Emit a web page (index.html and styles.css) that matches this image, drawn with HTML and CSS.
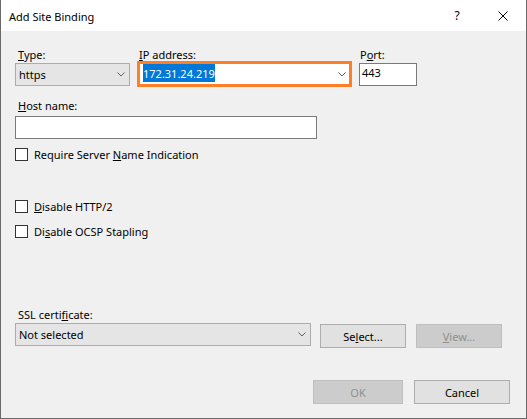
FILE: index.html
```html
<!DOCTYPE html>
<html lang="en">
<head>
<meta charset="utf-8">
<title>Add Site Binding</title>
<link rel="stylesheet" href="styles.css">
</head>
<body>
<div class="window">
  <div class="titlebar">
    <span class="title">Add Site Binding</span>
    <span class="cap-btn help">?</span>
    <span class="cap-btn close">
      <svg width="10" height="10" viewBox="0 0 10 10"><path d="M0.5 0.5 L9.5 9.5 M9.5 0.5 L0.5 9.5" stroke="#000" stroke-width="1" fill="none"/></svg>
    </span>
  </div>
  <div class="content">
    <div class="row-top">
      <div class="col col-type">
        <div class="lbl lbl-type"><u>T</u>ype:</div>
        <div class="combo combo-type">
          <span class="combo-text">https</span>
          <svg class="chev" width="8" height="5" viewBox="0 0 8 5"><path d="M0.5 0.5 L4 4 L7.5 0.5" stroke="#606060" stroke-width="1" fill="none"/></svg>
        </div>
      </div>
      <div class="col col-ip">
        <div class="lbl lbl-ip"><u>I</u>P address:</div>
        <div class="ip-focus">
          <span class="sel">172.31.24.219</span>
          <svg class="chev" width="8" height="5" viewBox="0 0 8 5"><path d="M0.5 0.5 L4 4 L7.5 0.5" stroke="#606060" stroke-width="1" fill="none"/></svg>
        </div>
      </div>
      <div class="col col-port">
        <div class="lbl lbl-port">P<u>o</u>rt:</div>
        <div class="textbox port-field">443</div>
      </div>
    </div>

    <div class="lbl lbl-host"><u>H</u>ost name:</div>
    <div class="textbox host-field"></div>

    <div class="check check-sni"><span class="box"></span><span class="check-text">Require Server <u>N</u>ame Indication</span></div>
    <div class="check check-http2"><span class="box"></span><span class="check-text"><u>D</u>isable HTTP/2</span></div>
    <div class="check check-ocsp"><span class="box"></span><span class="check-text">Di<u>s</u>able OCSP Stapling</span></div>

    <div class="lbl lbl-ssl">SSL certi<u>f</u>icate:</div>
    <div class="ssl-row">
      <div class="combo combo-ssl">
        <span class="combo-text">Not selected</span>
        <svg class="chev" width="8" height="5" viewBox="0 0 8 5"><path d="M0.5 0.5 L4 4 L7.5 0.5" stroke="#606060" stroke-width="1" fill="none"/></svg>
      </div>
      <div class="btn btn-select">Se<u>l</u>ect...</div>
      <div class="btn btn-view disabled"><u>V</u>iew...</div>
    </div>

    <div class="footer">
      <div class="btn btn-ok disabled">OK</div>
      <div class="btn btn-cancel">Cancel</div>
    </div>
  </div>
</div>
</body>
</html>
```

FILE: styles.css
```css
* { box-sizing: border-box; }

html, body {
  margin: 0;
  padding: 0;
  background: #f0f0f0;
}

body {
  font-family: "Noto Sans", "Open Sans", sans-serif;
  font-size: 11px;
  line-height: 15px;
  color: #000;
}

.window {
  width: 527px;
  height: 419px;
  border-left: 1px solid #6a6a6a;
  border-right: 1px solid #6a6a6a;
  border-bottom: 1px solid #6a6a6a;
  background: #f0f0f0;
  display: flex;
  flex-direction: column;
}

.titlebar {
  height: 31px;
  background: #fff;
  display: flex;
  align-items: center;
  flex-shrink: 0;
}

.title {
  flex: 1;
  padding-left: 8px;
  font-size: 11px;
  line-height: 15px;
  padding-top: 1px;
}

.cap-btn {
  width: 46px;
  height: 31px;
  display: flex;
  align-items: center;
  justify-content: center;
}

.help {
  font-size: 12px;
  padding-top: 0;
}

.content {
  flex: 1;
  padding-left: 14px;
  display: flex;
  flex-direction: column;
  align-items: flex-start;
}

.lbl { white-space: nowrap; }

.row-top {
  display: flex;
  gap: 7px;
  margin-top: 16px;
}

.col { display: flex; flex-direction: column; }
.col-type { width: 115px; }
.col-ip { width: 215px; }
.col-port { width: 58px; }

.lbl-type { margin-left: 3px; }
.lbl-ip { margin-left: 2px; }
.lbl-port { margin-left: 1px; }

.combo {
  height: 23px;
  background: #e5e5e5;
  border: 1px solid #acacac;
  display: flex;
  align-items: center;
  padding-left: 3px;
  padding-right: 4px;
  padding-bottom: 1px;
}

.combo-text { flex: 1; white-space: nowrap; }

.chev { display: block; flex-shrink: 0; }

.combo-type { margin-top: 1px; }

.ip-focus {
  margin-top: -1px;
  height: 26px;
  border: 3px solid #ff7f27;
  background: #fff;
  display: flex;
  align-items: flex-start;
  padding-left: 3px;
  padding-right: 3px;
}

.ip-focus .chev { margin-top: 8px; margin-left: auto; }

.sel {
  background: #0078d7;
  color: #fff;
  height: 18px;
  line-height: 18px;
  padding-top: 1px;
  white-space: nowrap;
}

.textbox {
  height: 23px;
  background: #fff;
  border: 1px solid #7a7a7a;
  padding-left: 2px;
  padding-top: 1px;
}

.port-field { margin-top: 1px; width: 58px; }

.lbl-host { margin-left: 3px; margin-top: 11px; }
.host-field { width: 302px; margin-top: 3px; }

.check {
  display: flex;
  align-items: center;
  gap: 6px;
}

.box {
  width: 13px;
  height: 13px;
  background: #fff;
  border: 1px solid #333;
  flex-shrink: 0;
}

.check-text { white-space: nowrap; }

.check-sni { margin-top: 8px; }
.check-http2 { margin-top: 37px; }
.check-ocsp { margin-top: 10px; }

.lbl-ssl { margin-left: 3px; margin-top: 68px; }

.ssl-row {
  display: flex;
  align-items: flex-start;
  margin-top: 1px;
}

.combo-ssl { width: 296px; }

.btn {
  height: 24px;
  background: #e1e1e1;
  border: 1px solid #adadad;
  display: flex;
  align-items: center;
  justify-content: center;
  white-space: nowrap;
}

.btn.disabled {
  background: #cccccc;
  border-color: #bfbfbf;
  color: #8f8f8f;
}

.btn-select { width: 86px; margin-left: 9px; margin-top: 1px; }
.btn-view { width: 86px; margin-left: 10px; margin-top: 1px; }

.footer {
  align-self: stretch;
  display: flex;
  justify-content: flex-end;
  gap: 11px;
  padding-right: 16px;
  margin-top: 32px;
}

.btn-ok { width: 90px; }
.btn-cancel { width: 96px; }
```
